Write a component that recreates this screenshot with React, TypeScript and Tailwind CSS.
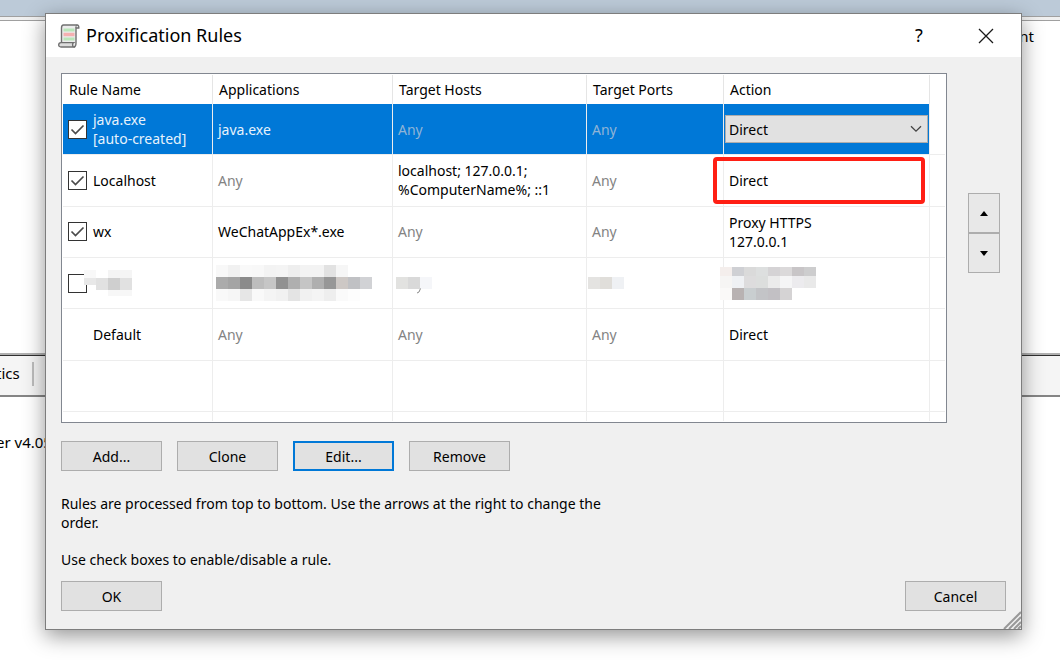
import { useState } from 'react';
import type { ReactNode } from 'react';

interface Rule {
  id: string;
  name: ReactNode;
  label: string;
  checked?: boolean;
  applications: ReactNode;
  hosts: ReactNode;
  ports: ReactNode;
  action: ReactNode;
  selected?: boolean;
}

interface MosaicProps {
  rows: string[][];
  heights: number[];
  className: string;
  children?: ReactNode;
}

const CELL = 12;

// Pixelated block that hides a private value
function Mosaic({ rows, heights, className, children }: MosaicProps) {
  const cols = Math.max(...rows.map((r) => r.length));
  const tops = heights.map((_, i) => heights.slice(0, i).reduce((a, b) => a + b, 0));
  return (
    <svg
      aria-hidden="true"
      width={cols * CELL}
      height={heights.reduce((a, b) => a + b, 0)}
      className={className}
    >
      {rows.map((row, y) =>
        row.map((fill, x) => (
          <rect
            key={`${x}-${y}`}
            x={x * CELL}
            y={tops[y]}
            width={CELL}
            height={heights[y]}
            fill={fill}
            shapeRendering="crispEdges"
          />
        ))
      )}
      {children}
    </svg>
  );
}

const Any = () => <span className="text-[#838383]">Any</span>;

const rules: Rule[] = [
  {
    id: 'java',
    name: <>java.exe<br />[auto-created]</>,
    label: 'java.exe',
    checked: true,
    applications: 'java.exe',
    hosts: <span className="text-[#8fb4d6]">Any</span>,
    ports: <span className="text-[#8fb4d6]">Any</span>,
    action: null,
    selected: true,
  },
  {
    id: 'localhost',
    name: 'Localhost',
    label: 'Localhost',
    checked: true,
    applications: <Any />,
    hosts: <>localhost; 127.0.0.1;<br />%ComputerName%; ::1</>,
    ports: <Any />,
    action: 'Direct',
  },
  {
    id: 'wx',
    name: 'wx',
    label: 'wx',
    checked: true,
    applications: 'WeChatAppEx*.exe',
    hosts: <Any />,
    ports: <Any />,
    action: <>Proxy HTTPS<br />127.0.0.1</>,
  },
  {
    id: 'hidden',
    name: (
      <Mosaic
        className="-ml-[9px]"
        heights={[8, 7, 5, 6]}
        rows={[
          ['#f8f8f8', '#ffffff', '#f4f4f4', '#f5f5f5'],
          ['#e8e8e8', '#e1e1e1', '#cfcfcf', '#e1e1e1'],
          ['none', '#e1e1e1', '#cfcfcf', '#e1e1e1'],
          ['none', 'none', '#f7f7f7', '#f7f7f7'],
        ]}
      />
    ),
    label: 'Hidden rule',
    checked: false,
    applications: (
      <Mosaic
        className="-ml-0.5"
        heights={[12, 12, 12]}
        rows={[
          ['#f8f8f8', '#f1f1f1', '#f9f9f9', '#f8f8f8', '#f3f3f3', '#f4f4f4', '#eeeeee', '#f3f3f3', '#f3f3f3', '#e2e2e2', '#f6f6f6', '#ffffff', '#ffffff'],
          ['#ababab', '#a4a4a4', '#8b8b8b', '#bdbdbd', '#c6c6c6', '#919191', '#afafaf', '#c5c5c5', '#afafaf', '#979797', '#cdc8c5', '#c0c1c4', '#d1d2d5'],
          ['#f9f9f9', '#f6f6f6', '#e6e6e6', '#f9f9f9', '#f4f4f4', '#f1f1f1', '#e4e4e4', '#f1f1f1', '#f4f4f4', '#eeeeee', '#fafafa', '#fdfdfd', '#ffffff'],
        ]}
      />
    ),
    hosts: (
      <Mosaic className="-ml-0.5 overflow-visible" heights={[12]} rows={[['#e2e2e0', '#d9d9d9', '#f5f6f9']]}>
        <path d="M24.500 11.500l-1.500 3.500-2 1" stroke="#8a8a8a" fill="none" />
      </Mosaic>
    ),
    ports: <Mosaic className="-ml-1" heights={[12]} rows={[['#e4e3e1', '#e0deda', '#eff1f4']]} />,
    action: (
      <Mosaic
        className="-ml-[9px]"
        heights={[9, 12, 12]}
        rows={[
          ['#f4eeec', '#cfd0d4', '#dadada', '#dddfdf', '#d5d3d5', '#dbd9da', '#c8c5c7', '#cdcdce'],
          ['#f6f5f4', '#eff1f4', '#dddcdd', '#dcdedd', '#ebebeb', '#f5f5f6', '#ecebee', '#e9e9e9'],
          ['#faf9f8', '#b8b2b2', '#c9ced0', '#c3c4c7', '#c2c0c4', '#d5d3d4'],
        ]}
      />
    ),
  },
  {
    id: 'default',
    name: 'Default',
    label: 'Default',
    applications: <Any />,
    hosts: <Any />,
    ports: <Any />,
    action: 'Direct',
  },
];

function ScrollIcon() {
  return (
    <svg width="22" height="24" viewBox="0 0 22 24" fill="none" aria-hidden="true">
      <path
        d="M3.500 19V4c0-2 .5-3 2-3H19c1.400 0 2 1 1.800 3H18v15c0 2.600-.6 4-2.500 4"
        fill="#ececec"
        stroke="#707070"
        strokeWidth="1.400"
      />
      <path d="M18 4V2.500C18 1.500 18.500 1 19.300 1" stroke="#707070" />
      <path
        d="M15.500 23H3c-1.600 0-2.300-.9-2.300-2.200S1.500 18.600 3 18.600h12.500c-1.200.8-1.200 3.400 0 4.400Z"
        fill="#dcdcdc"
        stroke="#707070"
        strokeWidth="1.400"
      />
      <path d="M5.500 6h11M5.500 15h11" stroke="#b9e6b9" strokeWidth="3" />
      <path d="M5.500 10.500h11" stroke="#f5b0b0" strokeWidth="3.500" />
    </svg>
  );
}

function RuleCheckbox({ checked, label }: { checked: boolean; label: string }) {
  const [on, setOn] = useState(checked);
  return (
    <span className="grid shrink-0">
      <input
        type="checkbox"
        aria-label={label}
        checked={on}
        onChange={() => setOn(!on)}
        className="col-start-1 row-start-1 size-[19px] appearance-none border border-[#333333] bg-white"
      />
      {on && (
        <svg
          viewBox="0 0 19 19"
          className="pointer-events-none col-start-1 row-start-1 size-[19px]"
          fill="none"
          aria-hidden="true"
        >
          <path d="M3.500 9.500l4 4L15.500 5.500" stroke="#4a4a4a" strokeWidth="1.700" />
        </svg>
      )}
    </span>
  );
}

function ActionSelect() {
  return (
    <div className="grid items-center px-px">
      <select
        aria-label="Action"
        defaultValue="Direct"
        className="col-start-1 row-start-1 h-7 w-full appearance-none border border-[#adadad] bg-[#e1e1e1] px-[3px] text-black"
      >
        <option>Direct</option>
        <option>Proxy HTTPS 127.0.0.1</option>
      </select>
      <svg
        width="12"
        height="8"
        viewBox="0 0 12 8"
        fill="none"
        className="pointer-events-none col-start-1 row-start-1 mr-1.5 justify-self-end"
        aria-hidden="true"
      >
        <path d="M1 1.200l5 5 5-5" stroke="#444444" strokeWidth="1.300" />
      </svg>
    </div>
  );
}

function DialogButton({ children, active }: { children: ReactNode; active?: boolean }) {
  return (
    <button
      type="button"
      className={
        active
          ? 'h-[30px] w-[101px] border-2 border-[#0078d7] bg-[#e1e1e1]'
          : 'h-[30px] w-[101px] border border-[#adadad] bg-[#e1e1e1]'
      }
    >
      {children}
    </button>
  );
}

function RulesTable() {
  const cell = 'border-r border-b border-[#ededed] p-0 pl-[5px] align-middle';
  return (
    <div className="flex h-[350px] min-w-0 flex-1 flex-col border border-[#828790] bg-white px-px pt-px">
      <table className="h-[337px] w-full table-fixed border-separate border-spacing-0 text-left">
        <colgroup>
          <col className="w-[150px]" />
          <col className="w-[180px]" />
          <col className="w-[194px]" />
          <col className="w-[137px]" />
          <col className="w-[206px]" />
          <col />
        </colgroup>
        <thead>
          <tr className="h-[29px]">
            {['Rule Name', 'Applications', 'Target Hosts', 'Target Ports', 'Action'].map((h) => (
              <th key={h} scope="col" className="border-r border-[#e5e5e5] p-0 pl-[6px] font-normal">
                {h}
              </th>
            ))}
            <td />
          </tr>
        </thead>
        <tbody>
          {rules.map((rule) => (
            <tr key={rule.id} className={rule.selected ? 'h-[51px] text-[#e6f2fc]' : 'h-[51px] text-black'}>
              <td className={`${cell} ${rule.selected ? 'bg-[#0078d7]' : ''}`}>
                <div className="flex items-center gap-[6px]">
                  {rule.checked === undefined ? (
                    <span className="w-[19px]" />
                  ) : (
                    <RuleCheckbox checked={rule.checked} label={rule.label} />
                  )}
                  <div>{rule.name}</div>
                </div>
              </td>
              <td className={`${cell} ${rule.selected ? 'bg-[#0078d7]' : ''}`}>{rule.applications}</td>
              <td className={`${cell} ${rule.selected ? 'bg-[#0078d7]' : ''}`}>{rule.hosts}</td>
              <td className={`${cell} ${rule.selected ? 'bg-[#0078d7]' : ''}`}>{rule.ports}</td>
              {rule.selected ? (
                <td className="border-r border-b border-[#ededed] bg-[#0078d7] p-0 align-middle">
                  <ActionSelect />
                </td>
              ) : (
                <td className={cell}>
                  {rule.id === 'localhost' ? (
                    <div className="relative">
                      {rule.action}
                      <span className="pointer-events-none absolute -inset-y-[14px] -left-4 right-1 rounded-[4px] border-4 border-[#ff1f14]" />
                    </div>
                  ) : (
                    rule.action
                  )}
                </td>
              )}
              <td className="border-b border-[#ededed]" />
            </tr>
          ))}
          <tr className="h-[51px]">
            <td className={cell} />
            <td className={cell} />
            <td className={cell} />
            <td className={cell} />
            <td className={cell} />
            <td className="border-b border-[#ededed]" />
          </tr>
        </tbody>
      </table>
      <div className="flex flex-1 pb-px">
        <div className="w-[150px] border-r border-[#ededed]" />
        <div className="w-[180px] border-r border-[#ededed]" />
        <div className="w-[194px] border-r border-[#ededed]" />
        <div className="w-[137px] border-r border-[#ededed]" />
        <div className="w-[206px] border-r border-[#ededed]" />
      </div>
    </div>
  );
}

function RulesDialog() {
  return (
    <section
      role="dialog"
      aria-labelledby="dialog-title"
      className="absolute top-[13px] right-[38px] left-[45px] border border-[#7d7d7d] bg-[#f0f0f0] shadow-[0_6px_20px_0_rgba(0,0,0,0.42)]"
    >
      <header className="flex h-[43px] items-center bg-white pl-3">
        <ScrollIcon />
        <h1 id="dialog-title" className="ml-[6px] flex-1 text-[18px]">
          Proxification Rules
        </h1>
        <button type="button" aria-label="Help" className="w-16 text-[18px]">
          ?
        </button>
        <button type="button" aria-label="Close" className="flex w-[70px] justify-center">
          <svg width="16" height="16" viewBox="0 0 16 16" fill="none" aria-hidden="true">
            <path d="M1 1l14 14M15 1L1 15" stroke="#1a1a1a" strokeWidth="1.300" />
          </svg>
        </button>
      </header>

      <div className="px-[15px] pt-4 pb-[18px]">
        <div className="flex items-start">
          <RulesTable />
          <div className="mt-[120px] mr-[6px] ml-[21px] flex flex-col">
            <button
              type="button"
              aria-label="Move up"
              className="flex h-10 w-8 items-center justify-center border border-[#adadad] bg-[#e8e8e8]"
            >
              <svg width="8" height="5" aria-hidden="true">
                <path d="M4 0l4 5H0z" />
              </svg>
            </button>
            <button
              type="button"
              aria-label="Move down"
              className="flex h-10 w-8 items-center justify-center border border-[#adadad] bg-[#e8e8e8]"
            >
              <svg width="8" height="5" aria-hidden="true">
                <path d="M0 0h8L4 5z" />
              </svg>
            </button>
          </div>
        </div>

        <div className="mt-[18px] flex gap-[15px]">
          <DialogButton>Add...</DialogButton>
          <DialogButton>Clone</DialogButton>
          <DialogButton active>Edit...</DialogButton>
          <DialogButton>Remove</DialogButton>
        </div>

        <p className="mt-[23px] max-w-[570px]">
          Rules are processed from top to bottom. Use the arrows at the right to change the order.
        </p>
        <p className="mt-[18px]">Use check boxes to enable/disable a rule.</p>

        <div className="mt-3 flex justify-between">
          <DialogButton>OK</DialogButton>
          <DialogButton>Cancel</DialogButton>
        </div>
      </div>

      <svg
        width="18"
        height="18"
        viewBox="0 0 18 18"
        fill="none"
        className="absolute right-0 bottom-0"
        aria-hidden="true"
      >
        <path d="M1 18L18 1M6 18L18 6M11 18l7-7M15 18l3-3" stroke="#999999" strokeWidth="2" />
      </svg>
    </section>
  );
}

export default function App() {
  return (
    <main className="relative flex min-h-screen flex-col overflow-hidden bg-white font-['Noto_Sans',sans-serif] text-[14px] leading-[19px] text-black">
      <div className="h-4 bg-[#bccad8]" />
      <div className="h-[5px] border-y border-[#a0a0a0] bg-[#f0f0f0]" />
      <div className="flex h-[332px] justify-end pt-[6px] pr-[26px] text-[15px]">
        <span>nt</span>
      </div>
      <div className="h-0.5 bg-[#b0b0b0]" />
      <div className="flex h-[42px] items-center border-t border-b-2 border-t-[#303030] border-b-[#858585] bg-[#f5f5f5] pb-1 text-[15px]">
        <span className="-ml-1">tics</span>
        <span className="ml-3 h-6 border-l-2 border-[#bdbdbd]" />
      </div>
      <p className="mt-9 -ml-1 text-[15px]">er v4.05</p>
      <RulesDialog />
    </main>
  );
}
